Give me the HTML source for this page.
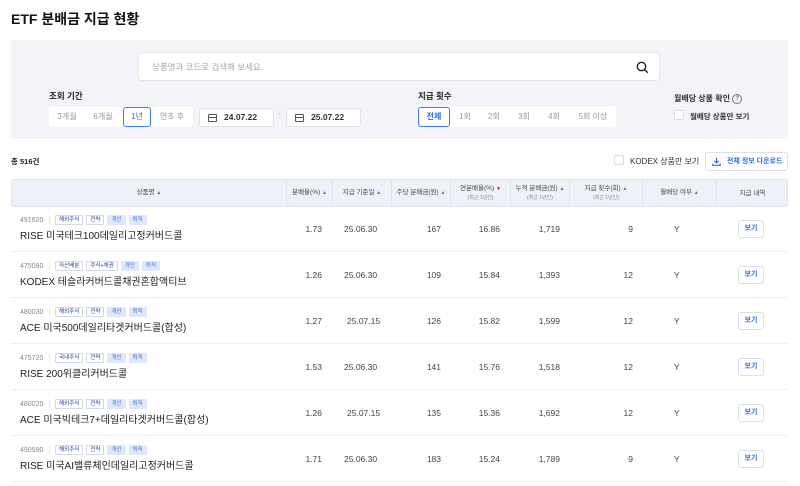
<!DOCTYPE html>
<html><head><meta charset="utf-8"><style>
*{margin:0;padding:0;box-sizing:border-box}
body{width:800px;height:486px;overflow:hidden;background:#fff;font-family:"Liberation Sans","Noto Sans CJK KR",sans-serif;color:#222;position:relative}
.a{position:absolute;white-space:nowrap}
.panel{left:11px;top:40px;width:777px;height:99px;background:#f3f4f7}
.search{left:138px;top:52px;width:522px;height:29px;background:#fff;border:1px solid #e3e5ea;border-radius:4px}
.seg{background:#fff;border-radius:3px;height:20px}
.seg span{position:absolute;top:0;height:20px;line-height:20px;font-size:8px;color:#999;text-align:center}
.seg span.on{border:1px solid #3b7bf0;border-radius:3px;color:#2f6fe0;background:#fff;line-height:18px}
.date{background:#fff;border:1px solid #e0e2e7;border-radius:3px;height:19px;font-size:8.5px;font-weight:bold;line-height:17px;padding-left:24px;color:#333}
.cal{position:absolute;left:8px;top:5px;width:9px;height:8px;border:1px solid #555;border-radius:1px}
.cal:before{content:"";position:absolute;left:0;right:0;top:2px;border-top:1px solid #555}
.th{top:179px;height:28px;background:#eef1f7;border:1px solid #dfe3ec;border-radius:3px}
.hc{position:absolute;top:0;height:26px;border-left:1px solid #dfe3ec;font-size:6.5px;color:#444;text-align:center;display:flex;flex-direction:column;justify-content:center;line-height:9px;white-space:nowrap}
.hc small{font-size:5px;color:#888}
.up{color:#5b6fa8;font-size:5px}
.dn{color:#c0203a;font-size:5px}
.row{left:11px;width:777px;height:46px;border-bottom:1px solid #eceef2}
.code{font-size:7px;color:#888}
.tag{display:inline-block;height:10px;line-height:9px;font-size:5.5px;padding:0 3px;border:1px solid #d5d9e2;border-radius:1px;color:#23408e;margin-right:3px;vertical-align:middle}
.tag.b{background:#dde8fd;border-color:#dde8fd;color:#3b6fd8}
.nm{font-size:10px;color:#222}
.v{font-size:8.5px;color:#444}
.btn{width:26px;height:18px;border:1px solid #dde0e6;border-radius:3px;font-size:7px;color:#2f6fe0;font-weight:bold;text-align:center;line-height:16px;background:#fff}
</style></head><body>
<div class="a" style="left:11px;top:9px;font-size:14px;font-weight:bold;color:#111">ETF 분배금 지급 현황</div>
<div class="a panel"></div>
<div class="a search"><span class="a" style="left:13px;top:8px;font-size:8.5px;color:#aaa">상품명과 코드로 검색해 보세요.</span>
<svg class="a" style="left:497px;top:8px" width="13" height="13" viewBox="0 0 13 13"><circle cx="5.5" cy="5.5" r="4.2" fill="none" stroke="#222" stroke-width="1.4"/><path d="M8.6 8.6L11.8 11.8" stroke="#222" stroke-width="1.4"/></svg></div>
<div class="a" style="left:49px;top:90px;font-size:8.5px;font-weight:bold;color:#222">조회 기간</div>
<div class="a seg" style="left:49px;top:107px;width:144px">
<span style="left:0;width:36px">3개월</span><span style="left:36px;width:36px">6개월</span><span class="on" style="left:74px;width:28px">1년</span><span style="left:104px;width:38px">연초 후</span></div>
<div class="a date" style="left:199px;top:108px;width:75px"><i class="cal"></i>24.07.22</div>
<div class="a" style="left:278px;top:111px;font-size:7px;color:#999">-</div>
<div class="a date" style="left:286px;top:108px;width:75px"><i class="cal"></i>25.07.22</div>
<div class="a" style="left:418px;top:90px;font-size:8.5px;font-weight:bold;color:#222">지급 횟수</div>
<div class="a seg" style="left:418px;top:107px;width:198px">
<span class="on" style="left:0;width:32px;font-weight:bold">전체</span><span style="left:36px;width:22px">1회</span><span style="left:65px;width:22px">2회</span><span style="left:95px;width:22px">3회</span><span style="left:125px;width:22px">4회</span><span style="left:155px;width:40px">5회 이상</span></div>
<div class="a" style="left:674px;top:93px;font-size:8px;font-weight:bold;color:#333">월배당 상품 확인 <span style="display:inline-block;width:10px;height:10px;border:1px solid #777;border-radius:50%;font-size:6px;line-height:8px;text-align:center;color:#777;vertical-align:middle">?</span></div>
<div class="a" style="left:674px;top:110px;width:10px;height:10px;border:1px solid #ddd;background:#fff;border-radius:2px"></div>
<div class="a" style="left:690px;top:111px;font-size:7.5px;color:#333;font-weight:bold">월배당 상품만 보기</div>
<div class="a" style="left:11px;top:156px;font-size:7.5px;font-weight:bold;color:#222">총 516건</div>
<div class="a" style="left:614px;top:155px;width:10px;height:10px;border:1px solid #ddd;border-radius:2px"></div>
<div class="a" style="left:630px;top:156px;font-size:8px;color:#333">KODEX 상품만 보기</div>
<div class="a" style="left:705px;top:152px;width:83px;height:19px;border:1px solid #dde0e6;border-radius:3px;font-size:7px;color:#2f6fe0;font-weight:bold;line-height:17px;padding-left:21px"><svg class="a" style="left:6px;top:4px" width="9" height="9" viewBox="0 0 9 9"><path d="M4.5 0.5V6M2.3 3.8L4.5 6L6.7 3.8M0.8 6.5V8.3H8.2V6.5" fill="none" stroke="#2f6fe0" stroke-width="1.1"/></svg>전체 정보 다운로드</div>
<div class="a th" style="left:11px;width:777px">
<div class="hc" style="left:0;width:274px;border-left:0"><div>상품명 <span class="up">▲</span></div></div>
<div class="hc" style="left:274px;width:46px"><div>분배율(%) <span class="up">▲</span></div></div>
<div class="hc" style="left:320px;width:59px"><div>지급 기준일 <span class="up">▲</span></div></div>
<div class="hc" style="left:379px;width:59px"><div>주당 분배금(원) <span class="up">▲</span></div></div>
<div class="hc" style="left:438px;width:60px"><div>연분배율(%) <span class="dn">▼</span></div><small>(최근 1년간)</small></div>
<div class="hc" style="left:498px;width:59px"><div>누적 분배금(원) <span class="up">▲</span></div><small>(최근 1년간)</small></div>
<div class="hc" style="left:557px;width:73px"><div>지급 횟수(회) <span class="up">▲</span></div><small>(최근 1년간)</small></div>
<div class="hc" style="left:630px;width:74px"><div>월배당 여부 <span class="up">▲</span></div></div>
<div class="hc" style="left:704px;width:72px"><div>지급 내역</div></div>
</div>
<div class="a row" style="top:206px"><span class="a code" style="left:9px;top:9px">491620 <span style="color:#ccc;margin:0 3px">|</span> <span class="tag">해외주식</span><span class="tag">전략</span><span class="tag b">개인</span><span class="tag b">퇴직</span></span><span class="a nm" style="left:9px;top:21px">RISE 미국테크100데일리고정커버드콜</span><span class="a v" style="right:466px;top:18px">1.73</span><span class="a v" style="left:333px;top:18px">25.06.30</span><span class="a v" style="right:347px;top:18px">167</span><span class="a v" style="right:288px;top:18px">16.86</span><span class="a v" style="right:228px;top:18px">1,719</span><span class="a v" style="right:155px;top:18px">9</span><span class="a v" style="left:663px;top:18px">Y</span><span class="a btn" style="left:727px;top:14px">보기</span></div>
<div class="a row" style="top:252px"><span class="a code" style="left:9px;top:9px">475080 <span style="color:#ccc;margin:0 3px">|</span> <span class="tag">자산배분</span><span class="tag">주식+채권</span><span class="tag b">개인</span><span class="tag b">퇴직</span></span><span class="a nm" style="left:9px;top:21px">KODEX 테슬라커버드콜채권혼합액티브</span><span class="a v" style="right:466px;top:18px">1.26</span><span class="a v" style="left:333px;top:18px">25.06.30</span><span class="a v" style="right:347px;top:18px">109</span><span class="a v" style="right:288px;top:18px">15.84</span><span class="a v" style="right:228px;top:18px">1,393</span><span class="a v" style="right:155px;top:18px">12</span><span class="a v" style="left:663px;top:18px">Y</span><span class="a btn" style="left:727px;top:14px">보기</span></div>
<div class="a row" style="top:298px"><span class="a code" style="left:9px;top:9px">480030 <span style="color:#ccc;margin:0 3px">|</span> <span class="tag">해외주식</span><span class="tag">전략</span><span class="tag b">개인</span><span class="tag b">퇴직</span></span><span class="a nm" style="left:9px;top:21px">ACE 미국500데일리타겟커버드콜(합성)</span><span class="a v" style="right:466px;top:18px">1.27</span><span class="a v" style="left:336px;top:18px">25.07.15</span><span class="a v" style="right:347px;top:18px">126</span><span class="a v" style="right:288px;top:18px">15.82</span><span class="a v" style="right:228px;top:18px">1,599</span><span class="a v" style="right:155px;top:18px">12</span><span class="a v" style="left:663px;top:18px">Y</span><span class="a btn" style="left:727px;top:14px">보기</span></div>
<div class="a row" style="top:344px"><span class="a code" style="left:9px;top:9px">475720 <span style="color:#ccc;margin:0 3px">|</span> <span class="tag">국내주식</span><span class="tag">전략</span><span class="tag b">개인</span><span class="tag b">퇴직</span></span><span class="a nm" style="left:9px;top:21px">RISE 200위클리커버드콜</span><span class="a v" style="right:466px;top:18px">1.53</span><span class="a v" style="left:333px;top:18px">25.06.30</span><span class="a v" style="right:347px;top:18px">141</span><span class="a v" style="right:288px;top:18px">15.76</span><span class="a v" style="right:228px;top:18px">1,518</span><span class="a v" style="right:155px;top:18px">12</span><span class="a v" style="left:663px;top:18px">Y</span><span class="a btn" style="left:727px;top:14px">보기</span></div>
<div class="a row" style="top:390px"><span class="a code" style="left:9px;top:9px">480020 <span style="color:#ccc;margin:0 3px">|</span> <span class="tag">해외주식</span><span class="tag">전략</span><span class="tag b">개인</span><span class="tag b">퇴직</span></span><span class="a nm" style="left:9px;top:21px">ACE 미국빅테크7+데일리타겟커버드콜(합성)</span><span class="a v" style="right:466px;top:18px">1.26</span><span class="a v" style="left:336px;top:18px">25.07.15</span><span class="a v" style="right:347px;top:18px">135</span><span class="a v" style="right:288px;top:18px">15.36</span><span class="a v" style="right:228px;top:18px">1,692</span><span class="a v" style="right:155px;top:18px">12</span><span class="a v" style="left:663px;top:18px">Y</span><span class="a btn" style="left:727px;top:14px">보기</span></div>
<div class="a row" style="top:436px"><span class="a code" style="left:9px;top:9px">490590 <span style="color:#ccc;margin:0 3px">|</span> <span class="tag">해외주식</span><span class="tag">전략</span><span class="tag b">개인</span><span class="tag b">퇴직</span></span><span class="a nm" style="left:9px;top:21px">RISE 미국AI밸류체인데일리고정커버드콜</span><span class="a v" style="right:466px;top:18px">1.71</span><span class="a v" style="left:333px;top:18px">25.06.30</span><span class="a v" style="right:347px;top:18px">183</span><span class="a v" style="right:288px;top:18px">15.24</span><span class="a v" style="right:228px;top:18px">1,789</span><span class="a v" style="right:155px;top:18px">9</span><span class="a v" style="left:663px;top:18px">Y</span><span class="a btn" style="left:727px;top:14px">보기</span></div>
</body></html>
